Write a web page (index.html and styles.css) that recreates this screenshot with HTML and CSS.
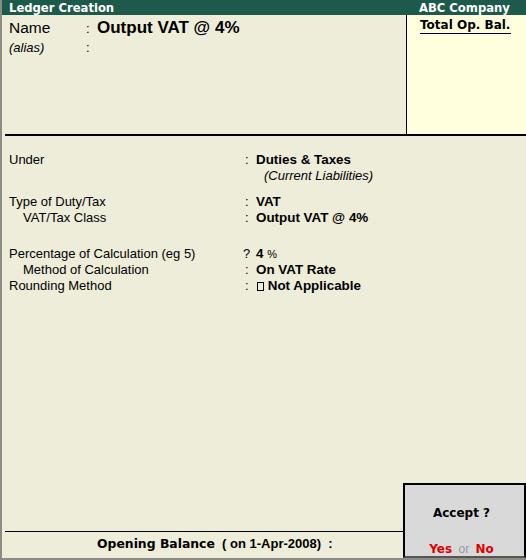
FILE: index.html
```html
<!DOCTYPE html>
<html>
<head>
<meta charset="utf-8">
<link rel="stylesheet" href="styles.css">
</head>
<body>
<div class="screen">
  <div class="titlebar">
    <div class="title-left">Ledger Creation</div>
    <div class="title-right">ABC Company</div>
  </div>
  <div class="top">
    <div class="top-left">
      <div class="name-row">
        <span class="name-label">Name</span>
        <span class="name-colon">:</span>
        <span class="name-value">Output VAT @ 4%</span>
      </div>
      <div class="alias-row">
        <span class="alias-label">(alias)</span>
        <span class="alias-colon">:</span>
      </div>
    </div>
    <div class="top-right">
      <div class="opbal">Total Op. Bal.</div>
    </div>
  </div>
  <div class="divider"></div>
  <div class="details">
    <div class="row"><span class="lbl">Under</span><span class="col">:</span><span class="val">Duties &amp; Taxes</span></div>
    <div class="row"><span class="lbl"></span><span class="col"></span><span class="sub">(Current Liabilities)</span></div>
    <div class="row gap1"><span class="lbl">Type of Duty/Tax</span><span class="col">:</span><span class="val">VAT</span></div>
    <div class="row"><span class="lbl ind">VAT/Tax Class</span><span class="col">:</span><span class="val">Output VAT @ 4%</span></div>
    <div class="row gap2"><span class="lbl">Percentage of Calculation (eg 5)</span><span class="col q">?</span><span class="val">4 <span class="pct">%</span></span></div>
    <div class="row"><span class="lbl ind">Method of Calculation</span><span class="col">:</span><span class="val">On VAT Rate</span></div>
    <div class="row"><span class="lbl">Rounding Method</span><span class="col">:</span><span class="val"><span class="box"></span> Not Applicable</span></div>
  </div>
  <div class="bottom">
    <div class="bottom-left">
      <div class="bline"></div>
      <div class="opening"><span class="ob">Opening Balance</span><span class="obd">&nbsp; ( on 1-Apr-2008) &nbsp;:</span></div>
    </div>
    <div class="accept">
      <div class="accept-q">Accept ?</div>
      <div class="accept-a"><span class="yn">Yes</span> <span class="or">or</span> <span class="yn">No</span></div>
    </div>
  </div>
</div>
</body>
</html>
```
FILE: styles.css
```css
html, body {
  margin: 0;
  padding: 0;
  background: #ededd9;
}
.screen {
  width: 526px;
  height: 560px;
  box-sizing: border-box;
  border-left: 2px solid #8c8c84;
  border-bottom: 2px solid #8c8c84;
  background: #ededd9;
  display: flex;
  flex-direction: column;
  font-family: "Liberation Sans", Arial, sans-serif;
  color: #000;
  overflow: hidden;
}
.titlebar {
  height: 15px;
  background: #1d5a4b;
  display: flex;
  justify-content: space-between;
  color: #fff;
  font-family: "DejaVu Sans", Verdana, sans-serif;
  font-weight: bold;
  font-size: 11.6px;
  line-height: 16px;
  flex: none;
}
.title-left {
  padding-left: 7px;
}
.title-right {
  width: 107px;
}
.top {
  height: 119px;
  display: flex;
  flex: none;
}
.top-left {
  flex: 1;
  padding-left: 7px;
  padding-top: 3px;
}
.name-row {
  display: flex;
  align-items: baseline;
  line-height: 20px;
  height: 20px;
}
.name-label {
  width: 77px;
  font-size: 15.5px;
}
.name-colon {
  width: 11px;
  font-size: 13px;
}
.name-value {
  font-weight: bold;
  font-size: 17px;
}
.alias-row {
  display: flex;
  font-size: 13px;
  line-height: 15px;
  margin-top: 2px;
}
.alias-label {
  width: 77px;
  font-style: italic;
}
.top-right {
  width: 120px;
  background: #ffffdd;
  border-left: 1px solid #000;
  padding-left: 13px;
  box-sizing: border-box;
}
.opbal {
  display: inline-block;
  font-family: "DejaVu Sans", Verdana, sans-serif;
  font-weight: bold;
  font-size: 12px;
  line-height: 15px;
  border-bottom: 1px solid #000;
  padding-right: 1px;
}
.divider {
  height: 2px;
  margin-left: 3px;
  background: #000;
  flex: none;
}
.details {
  flex: 1;
  padding-top: 16px;
  padding-left: 7px;
  font-size: 13px;
}
.row {
  display: grid;
  grid-template-columns: 236px 11px 1fr;
  height: 16px;
  line-height: 16px;
}
.gap1 {
  margin-top: 10px;
}
.gap2 {
  margin-top: 20px;
}
.ind {
  padding-left: 14px;
}
.q {
  margin-left: -2px;
}
.val {
  font-weight: bold;
  font-size: 13.4px;
}
.pct {
  font-weight: normal;
  font-size: 11px;
}
.sub {
  font-style: italic;
  padding-left: 8px;
}
.box {
  display: inline-block;
  width: 5px;
  height: 7px;
  border: 1px solid #000;
  vertical-align: -1px;
  margin-left: 1px;
}
.bottom {
  height: 75px;
  display: flex;
  align-items: flex-end;
  flex: none;
}
.bottom-left {
  flex: 1;
  padding-left: 3px;
}
.bline {
  height: 1px;
  background: #000;
}
.opening {
  height: 26px;
  line-height: 24px;
  padding-left: 92px;
  font-weight: bold;
  font-size: 13px;
}
.ob {
  font-family: "DejaVu Sans", Verdana, sans-serif;
  font-size: 12.4px;
}
.accept {
  width: 123px;
  height: 75px;
  box-sizing: border-box;
  background: #d9d9d9;
  border: 2px solid #000;
  border-bottom-color: #555;
  display: flex;
  flex-direction: column;
  align-items: center;
  padding-right: 6px;
}
.accept-q {
  margin-top: 20px;
  font-family: "DejaVu Sans", Verdana, sans-serif;
  font-weight: bold;
  font-size: 12px;
  line-height: 16px;
}
.accept-a {
  margin-top: 20px;
  font-size: 12px;
  line-height: 16px;
}
.yn {
  color: #e00000;
  font-family: "DejaVu Sans", Verdana, sans-serif;
  font-weight: bold;
  font-size: 12px;
}
.or {
  color: #9a9a9a;
  padding: 0 3px;
}
```
